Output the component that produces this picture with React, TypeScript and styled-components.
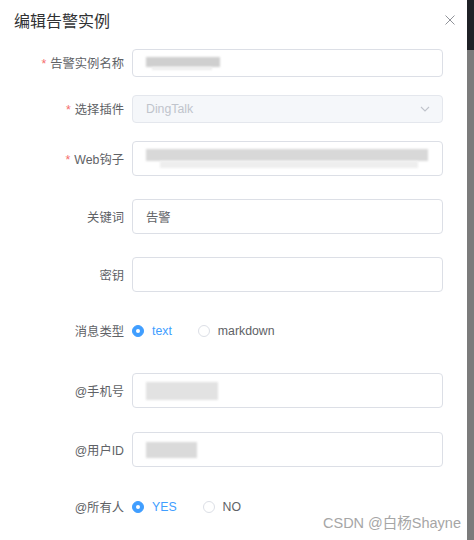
import styled, { createGlobalStyle } from 'styled-components'

const GlobalStyle = createGlobalStyle`
    html, body {
        margin: 0;
        padding: 0;
        background: #7b7b7b;
    }
    body {
        font-family: "Liberation Sans", "Noto Sans CJK SC", sans-serif;
    }
`

const Page = styled.div`
    display: flex;
    width: 474px;
    height: 540px;
    overflow: hidden;
`

const Backdrop = styled.div`
    flex: 1;
    display: flex;
    flex-direction: column;
    background: #7b7b7b;
`

const BackdropTop = styled.div`
    height: 50px;
    background: #1f2126;
`

const Dialog = styled.div`
    width: 467px;
    height: 540px;
    background: #fff;
    position: relative;
    box-sizing: border-box;
`

const Header = styled.div`
    height: 49px;
    box-sizing: border-box;
    padding: 12px 12px 0 14px;
    display: flex;
    justify-content: space-between;
    align-items: flex-start;
`

const Title = styled.div`
    font-size: 16px;
    line-height: 20px;
    color: #303133;
`

const CloseBtn = styled.button`
    border: 0;
    background: none;
    padding: 0;
    margin-top: 3px;
    width: 10px;
    height: 10px;
    display: flex;
    cursor: pointer;
`

const Form = styled.div`
    display: flex;
    flex-direction: column;
`

const FormItem = styled.div<{ $h: number; $mb: number }>`
    display: flex;
    align-items: center;
    height: ${p => p.$h}px;
    margin-bottom: ${p => p.$mb}px;
`

const Label = styled.div`
    width: 132px;
    box-sizing: border-box;
    padding-right: 8px;
    text-align: right;
    font-size: 12.3px;
    color: #606266;
    white-space: nowrap;
`

const Star = styled.span`
    color: #f56c6c;
    margin-right: 4px;
`

const Content = styled.div`
    width: 311px;
    height: 100%;
    display: flex;
    align-items: center;
`

const InputBox = styled.div<{ $disabled?: boolean }>`
    width: 100%;
    height: 100%;
    box-sizing: border-box;
    border: 1px solid ${p => (p.$disabled ? '#e4e7ed' : '#dcdfe6')};
    border-radius: 4px;
    background: ${p => (p.$disabled ? '#f5f7fa' : '#fff')};
    padding: 0 12px 0 13px;
    display: flex;
    align-items: center;
    justify-content: space-between;
    font-size: 12.3px;
    color: ${p => (p.$disabled ? '#c0c4cc' : '#606266')};
    overflow: hidden;
`

const RedactStack = styled.div`
    display: flex;
    flex-direction: column;
`

const Redact = styled.span<{ $w: number; $h: number; $tone: string; $ml?: number }>`
    display: block;
    width: ${p => p.$w}px;
    height: ${p => p.$h}px;
    margin-left: ${p => p.$ml ?? 0}px;
    background: ${p => p.$tone};
    filter: blur(1.2px);
`

const RadioGroup = styled.div`
    display: flex;
    align-items: center;
    gap: 26px;
`

const Radio = styled.label<{ $checked?: boolean }>`
    display: flex;
    align-items: center;
    gap: 8px;
    font-size: 12.3px;
    color: ${p => (p.$checked ? '#409eff' : '#606266')};
    cursor: pointer;
`

const RadioDot = styled.span<{ $checked?: boolean }>`
    width: 12px;
    height: 12px;
    box-sizing: border-box;
    border-radius: 50%;
    border: 1px solid ${p => (p.$checked ? '#409eff' : '#dcdfe6')};
    background: ${p => (p.$checked ? '#409eff' : '#fff')};
    display: flex;
    align-items: center;
    justify-content: center;
    &::after {
        content: '';
        width: 4px;
        height: 4px;
        border-radius: 50%;
        background: #fff;
        display: ${p => (p.$checked ? 'block' : 'none')};
    }
`

const Watermark = styled.div`
    position: absolute;
    right: 6px;
    bottom: 8px;
    font-size: 14.5px;
    color: #a6a6a6;
    white-space: nowrap;
`

const Chevron = () => (
    <svg width="10" height="6" viewBox="0 0 10 6">
        <path d="M1 1l4 4 4-4" fill="none" stroke="#c0c4cc" strokeWidth="1.1" />
    </svg>
)

const CloseIcon = () => (
    <svg width="10" height="10" viewBox="0 0 10 10">
        <path d="M0.5 0.5l9 9M9.5 0.5l-9 9" stroke="#909399" strokeWidth="1" />
    </svg>
)

const RadioItem = ({ checked, text }: { checked?: boolean; text: string }) => (
    <Radio $checked={checked}>
        <RadioDot $checked={checked} />
        {text}
    </Radio>
)

const App = () => {
    return <Page>
        <GlobalStyle />
        <Dialog>
            <Header>
                <Title>编辑告警实例</Title>
                <CloseBtn aria-label="close"><CloseIcon /></CloseBtn>
            </Header>
            <Form>
                <FormItem $h={28} $mb={18}>
                    <Label><Star>*</Star>告警实例名称</Label>
                    <Content>
                        <InputBox>
                            <RedactStack>
                                <Redact $w={74} $h={10} $tone="#cfcfcf" />
                                <Redact $w={60} $h={3} $tone="#ececec" $ml={6} />
                            </RedactStack>
                        </InputBox>
                    </Content>
                </FormItem>
                <FormItem $h={28} $mb={18}>
                    <Label><Star>*</Star>选择插件</Label>
                    <Content>
                        <InputBox $disabled>
                            DingTalk
                            <Chevron />
                        </InputBox>
                    </Content>
                </FormItem>
                <FormItem $h={35} $mb={23}>
                    <Label><Star>*</Star>Web钩子</Label>
                    <Content>
                        <InputBox>
                            <RedactStack>
                                <Redact $w={282} $h={12} $tone="#d8d8d8" />
                                <Redact $w={258} $h={7} $tone="#eeeeee" $ml={14} />
                            </RedactStack>
                        </InputBox>
                    </Content>
                </FormItem>
                <FormItem $h={35} $mb={23}>
                    <Label>关键词</Label>
                    <Content>
                        <InputBox>告警</InputBox>
                    </Content>
                </FormItem>
                <FormItem $h={35} $mb={21}>
                    <Label>密钥</Label>
                    <Content>
                        <InputBox />
                    </Content>
                </FormItem>
                <FormItem $h={35} $mb={25}>
                    <Label>消息类型</Label>
                    <Content>
                        <RadioGroup>
                            <RadioItem checked text="text" />
                            <RadioItem text="markdown" />
                        </RadioGroup>
                    </Content>
                </FormItem>
                <FormItem $h={35} $mb={24}>
                    <Label>@手机号</Label>
                    <Content>
                        <InputBox>
                            <Redact $w={72} $h={18} $tone="#e2e2e2" />
                        </InputBox>
                    </Content>
                </FormItem>
                <FormItem $h={35} $mb={22}>
                    <Label>@用户ID</Label>
                    <Content>
                        <InputBox>
                            <Redact $w={51} $h={16} $tone="#dadada" />
                        </InputBox>
                    </Content>
                </FormItem>
                <FormItem $h={35} $mb={0}>
                    <Label>@所有人</Label>
                    <Content>
                        <RadioGroup>
                            <RadioItem checked text="YES" />
                            <RadioItem text="NO" />
                        </RadioGroup>
                    </Content>
                </FormItem>
            </Form>
            <Watermark>CSDN @白杨Shayne</Watermark>
        </Dialog>
        <Backdrop>
            <BackdropTop />
        </Backdrop>
    </Page>
}

export default App
